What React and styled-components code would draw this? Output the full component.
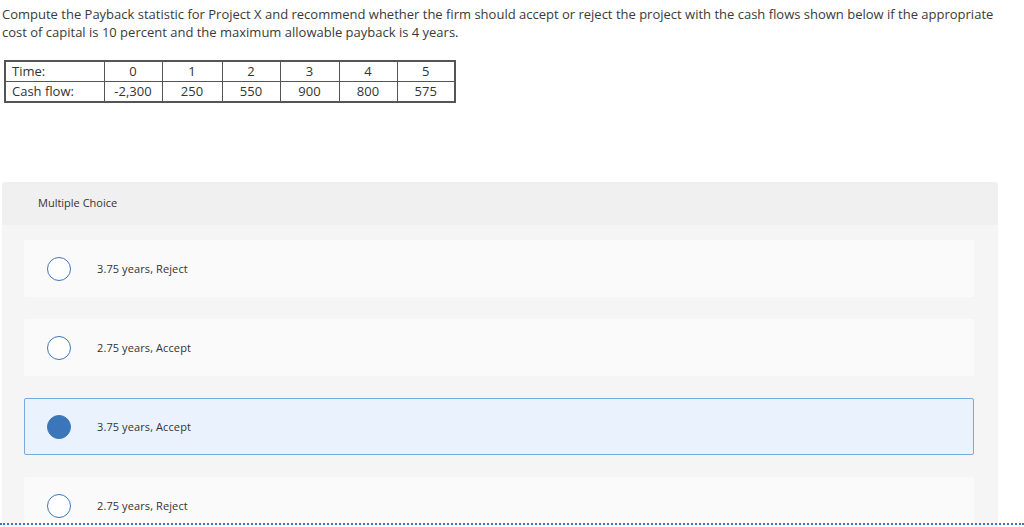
import styled, { createGlobalStyle } from 'styled-components'

const GlobalStyle = createGlobalStyle`
  body {
    margin: 0;
    background: #fff;
    font-family: "Open Sans", "Liberation Sans", sans-serif;
    color: #333;
  }
`

const options = [
  { label: '3.75 years, Reject' },
  { label: '2.75 years, Accept' },
  { label: '3.75 years, Accept', selected: true },
  { label: '2.75 years, Reject' },
]

const times = ['0', '1', '2', '3', '4', '5']
const flows = ['-2,300', '250', '550', '900', '800', '575']
const widths = [58, 60, 58, 59, 58, 58]

export default function App() {
  return (
    <Page>
      <GlobalStyle />
      <Question>
        Compute the Payback statistic for Project X and recommend whether the firm should accept or reject the project with the cash flows shown below if the appropriate cost of capital is 10 percent and the maximum allowable payback is 4 years.
      </Question>
      <FlowTable>
        <colgroup>
          <col style={{ width: 99 }} />
          {widths.map((w, i) => (
            <col key={i} style={{ width: w }} />
          ))}
        </colgroup>
        <tbody>
          <tr>
            <LabelCell>Time:</LabelCell>
            {times.map((t) => (
              <ValueCell key={t}>{t}</ValueCell>
            ))}
          </tr>
          <tr>
            <LabelCell>Cash flow:</LabelCell>
            {flows.map((f) => (
              <ValueCell key={f}>{f}</ValueCell>
            ))}
          </tr>
        </tbody>
      </FlowTable>
      <Panel>
        <PanelHeader>Multiple Choice</PanelHeader>
        <Choices>
          {options.map((o) => (
            <Choice key={o.label} $selected={o.selected}>
              <Radio $selected={o.selected} />
              <ChoiceText>{o.label}</ChoiceText>
            </Choice>
          ))}
        </Choices>
      </Panel>
      <FocusLine />
    </Page>
  )
}

const Page = styled.div`
  position: relative;
  height: 527px;
  overflow: hidden;
`

const Question = styled.p`
  margin: 0;
  padding: 5px 2px 0 2px;
  width: 1000px;
  font-size: 13px;
  line-height: 18px;
  color: #3a3a3a;
`

const FlowTable = styled.table`
  margin: 19px 0 0 4px;
  width: 450px;
  table-layout: fixed;
  border-collapse: collapse;
  border: 2px solid #555;
  font-size: 13px;
  color: #333;
`

const LabelCell = styled.td`
  border: 1px solid #555;
  height: 19px;
  padding: 0 0 0 6px;
  line-height: 19px;
`

const ValueCell = styled.td`
  border: 1px solid #555;
  text-align: center;
  height: 19px;
  padding: 0;
  line-height: 19px;
`

const Panel = styled.div`
  margin: 79px 0 0 2px;
  width: 996px;
  background: #f5f5f5;
  border-radius: 3px 3px 0 0;
  height: 400px;
`

const PanelHeader = styled.div`
  height: 43px;
  background: #f0f0f0;
  border-radius: 3px 3px 0 0;
  padding-left: 36px;
  display: flex;
  align-items: center;
  font-size: 11px;
  color: #333;
  box-sizing: border-box;
  padding-bottom: 2px;
`

const Choices = styled.div`
  display: flex;
  flex-direction: column;
  gap: 22px;
  padding: 15px 24px 0 22px;
`

const Choice = styled.div`
  height: 57px;
  box-sizing: border-box;
  display: flex;
  align-items: center;
  padding-left: 22px;
  background: ${(p) => (p.$selected ? '#eaf3fd' : '#fafafa')};
  border: 1px solid ${(p) => (p.$selected ? '#7aa9dc' : '#fafafa')};
  border-radius: 2px;
`

const Radio = styled.span`
  width: 24px;
  height: 24px;
  box-sizing: border-box;
  border-radius: 50%;
  border: 1px solid #3e76b5;
  background: ${(p) => (p.$selected ? '#3b76bb' : '#fff')};
  flex-shrink: 0;
`

const ChoiceText = styled.span`
  margin-left: 26px;
  font-size: 11px;
  letter-spacing: 0.1px;
  color: #333;
`

const FocusLine = styled.div`
  position: absolute;
  left: 0;
  right: 0;
  top: 523px;
  border-top: 2px dotted #3b76bb;
`
